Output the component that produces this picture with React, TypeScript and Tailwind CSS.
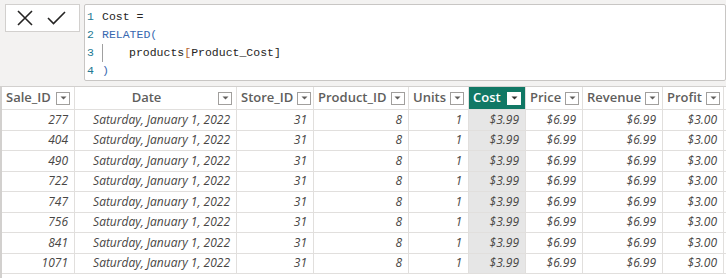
import React from 'react';

const columns = [
  { key: 'Sale_ID', width: 'w-[73px]', align: 'left' },
  { key: 'Date', width: 'w-[162px]', align: 'center' },
  { key: 'Store_ID', width: 'w-[77px]', align: 'left' },
  { key: 'Product_ID', width: 'w-[95px]', align: 'left' },
  { key: 'Units', width: 'w-[60px]', align: 'left' },
  { key: 'Cost', width: 'w-[57px]', align: 'left' },
  { key: 'Price', width: 'w-[57px]', align: 'left' },
  { key: 'Revenue', width: 'w-[80px]', align: 'left' },
  { key: 'Profit', width: 'w-[61px]', align: 'left' },
];

const ids = ['277', '404', '490', '722', '747', '756', '841', '1071'];

const rows = ids.map((id) => [
  id,
  'Saturday, January 1, 2022',
  '31',
  '8',
  '1',
  '$3.99',
  '$6.99',
  '$6.99',
  '$3.00',
]);

const Caret = ({ light }: { light?: boolean }) => (
  <div
    className={`flex h-[13px] w-[14px] shrink-0 items-center justify-center border ${
      light ? 'border-white bg-white' : 'border-[#a19f9d] bg-white'
    }`}
  >
    <svg width="7" height="4" viewBox="0 0 7 4">
      <path d="M0.5 0.5 L6.5 0.5 L3.5 3.5 Z" fill={light ? '#323130' : '#605e5c'} />
    </svg>
  </div>
);

const App: React.FC = () => {
  return (
    <div className="h-[278px] w-[726px] overflow-hidden bg-[#f3f2f1]" style={{ fontFamily: '"Open Sans", "Noto Sans", sans-serif' }}>
      {/* formula bar */}
      <div className="flex h-[86px] items-start gap-[4px] pl-[5px] pt-[4px]">
        <div className="flex h-[28px] w-[75px] items-center gap-[13px] border border-[#d2d0ce] bg-white pl-[10px]">
          <svg width="18" height="18" viewBox="0 0 18 18">
            <path d="M2 2 L16 16 M16 2 L2 16" stroke="#252423" strokeWidth="1.6" fill="none" />
          </svg>
          <svg width="19" height="14" viewBox="0 0 19 14">
            <path d="M1 7 L6.5 12.5 L18 1" stroke="#252423" strokeWidth="1.6" fill="none" />
          </svg>
        </div>
        <div
          className="relative h-[77px] flex-1 rounded-[2px] border border-[#c8c6c4] bg-white pt-[3px] text-[11.5px] leading-[18px]"
          style={{ fontFamily: '"Liberation Mono", "DejaVu Sans Mono", monospace' }}
        >
          <div className="flex">
            <span className="w-[17px] pl-[2px] text-[#237893]">1</span>
            <span className="text-[#252423]">Cost =</span>
          </div>
          <div className="flex">
            <span className="w-[17px] pl-[2px] text-[#237893]">2</span>
            <span className="text-[#3767b0]">RELATED(</span>
          </div>
          <div className="flex">
            <span className="w-[17px] pl-[2px] text-[#237893]">3</span>
            <span className="border-l border-[#a0a0a0] pl-[26px] text-[#252423]">
              products<span className="text-[#b5652d]">[</span>Product_Cost]
            </span>
          </div>
          <div className="flex">
            <span className="w-[17px] pl-[2px] text-[#237893]">4</span>
            <span className="text-[#3767b0]">)</span>
          </div>
        </div>
      </div>

      {/* table */}
      <div className="h-[192px] border-l-2 border-t border-[#d2d0ce] bg-white">
        <div className="flex h-[23px] border-b border-[#e1dfdd]">
          {columns.map((c) => {
            const active = c.key === 'Cost';
            return (
              <div
                key={c.key}
                className={`${c.width} flex shrink-0 items-center gap-[4px] border-r border-[#e1dfdd] pl-[4px] pr-[4px] text-[13px] font-semibold ${
                  active ? 'bg-[#117865] text-white' : 'text-[#605e5c]'
                }`}
              >
                <span className={`flex-1 ${c.align === 'center' ? 'text-center' : 'text-left'}`}>{c.key}</span>
                <Caret light={active} />
              </div>
            );
          })}
        </div>
        {rows.map((r, i) => (
          <div key={i} className="flex h-[20.5px] border-b border-[#e1dfdd]">
            {r.map((v, j) => (
              <div
                key={j}
                className={`${columns[j].width} flex shrink-0 items-center justify-end border-r border-[#e1dfdd] pr-[6px] text-[12px] italic text-[#484644] ${
                  j === 5 ? 'bg-[#e6e6e6]' : ''
                }`}
              >
                {v}
              </div>
            ))}
          </div>
        ))}
      </div>
    </div>
  );
};

export default App;
